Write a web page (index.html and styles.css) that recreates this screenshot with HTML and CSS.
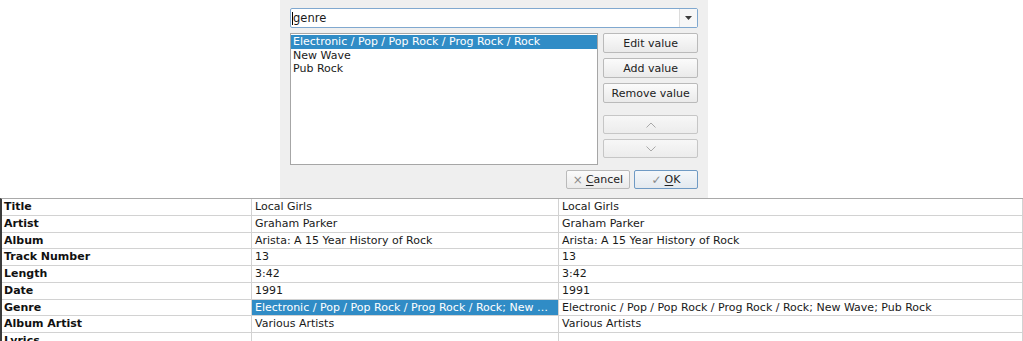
FILE: index.html
```html
<!DOCTYPE html>
<html lang="en">
<head>
    <meta charset="UTF-8">
    <title>Tag editor</title>
    <link rel="stylesheet" href="styles.css">
</head>
<body>
    <div class="top">
        <div class="dialog">
            <div class="combo">
                <div class="combo-text"><span class="caret"></span>genre</div>
                <div class="combo-arrow">
                    <svg width="7" height="4" viewBox="0 0 7 4"><polygon points="0,0 7,0 3.5,4" fill="#3c3c3c"/></svg>
                </div>
            </div>

            <div class="editor">
                <div class="value-list">
                    <div class="item selected">Electronic / Pop / Pop Rock / Prog Rock / Rock</div>
                    <div class="item">New Wave</div>
                    <div class="item">Pub Rock</div>
                </div>
                <div class="side-buttons">
                    <button class="btn">Edit value</button>
                    <button class="btn">Add value</button>
                    <button class="btn">Remove value</button>
                    <button class="btn move first-move" disabled>
                        <svg width="10" height="6" viewBox="0 0 10 6"><polyline points="0.5,5.5 5,1 9.5,5.5" fill="none" stroke="#a9a9a9" stroke-width="1"/></svg>
                    </button>
                    <button class="btn move" disabled>
                        <svg width="10" height="6" viewBox="0 0 10 6"><polyline points="0.5,0.5 5,5 9.5,0.5" fill="none" stroke="#a9a9a9" stroke-width="1"/></svg>
                    </button>
                </div>
            </div>

            <div class="footer">
                <button class="btn footer-btn"><span class="icon">×</span><span class="label"><u>C</u>ancel</span></button>
                <button class="btn footer-btn default"><span class="icon">✓</span><span class="label"><u>O</u>K</span></button>
            </div>
        </div>
    </div>

    <div class="tags" id="tags"></div>

    <script>
        const rows = [
            ['Title', 'Local Girls', 'Local Girls'],
            ['Artist', 'Graham Parker', 'Graham Parker'],
            ['Album', 'Arista: A 15 Year History of Rock', 'Arista: A 15 Year History of Rock'],
            ['Track Number', '13', '13'],
            ['Length', '3:42', '3:42'],
            ['Date', '1991', '1991'],
            ['Genre', 'Electronic / Pop / Pop Rock / Prog Rock / Rock; New …', 'Electronic / Pop / Pop Rock / Prog Rock / Rock; New Wave; Pub Rock'],
            ['Album Artist', 'Various Artists', 'Various Artists'],
            ['Lyrics', '', '']
        ];

        const tags = document.getElementById('tags');
        rows.forEach(row => {
            row.forEach((text, col) => {
                const cell = document.createElement('div');
                cell.className = col === 0 ? 'cell name' : 'cell';
                if (row[0] === 'Genre' && col === 1) {
                    cell.classList.add('selected');
                }
                cell.textContent = text;
                tags.appendChild(cell);
            });
        });
    </script>
</body>
</html>
```

FILE: styles.css
```css
html, body {
    margin: 0;
    padding: 0;
    background: #ffffff;
    font-family: "DejaVu Sans", sans-serif;
    font-size: 11px;
    color: #1a1a1a;
    overflow: hidden;
    height: 341px;
}

.top {
    height: 198px;
}

.dialog {
    margin-left: 280px;
    width: 408px;
    height: 180px;
    padding: 8px 10px 10px 10px;
    background: #efefef;
}

.combo {
    display: flex;
    height: 18px;
    border: 1px solid #80a8cf;
    border-radius: 2px;
    background: #ffffff;
}

.combo-text {
    flex: 1;
    display: flex;
    align-items: center;
    padding-left: 1px;
    font-size: 11.5px;
}

.caret {
    display: inline-block;
    width: 1px;
    height: 13px;
    background: #000000;
}

.combo-arrow {
    width: 17px;
    display: flex;
    align-items: center;
    justify-content: center;
    border-left: 1px solid #dcdcdc;
    background: #f7f7f7;
}

.editor {
    display: flex;
    gap: 5px;
    margin-top: 5px;
}

.value-list {
    width: 307px;
    height: 129px;
    border: 1px solid #a6a6a6;
    background: #ffffff;
    padding-top: 1px;
}

.item {
    height: 13.5px;
    line-height: 13.5px;
    padding-left: 2px;
    white-space: nowrap;
    color: #1a1a1a;
}

.item.selected {
    background: #308cc6;
    color: #ffffff;
}

.side-buttons {
    display: flex;
    flex-direction: column;
    gap: 5px;
    width: 95px;
}

.btn {
    height: 20px;
    padding: 0;
    border: 1px solid #bababa;
    border-radius: 2px;
    background: linear-gradient(#fbfbfb, #eaeaea);
    font-family: "DejaVu Sans", sans-serif;
    font-size: 11px;
    color: #222222;
}

.btn.move {
    height: 19px;
    display: flex;
    align-items: center;
    justify-content: center;
    background: linear-gradient(#f7f7f7, #ececec);
    border-color: #c6c6c6;
}

.first-move {
    margin-top: 7px;
}

.footer {
    display: flex;
    justify-content: flex-end;
    gap: 4px;
    margin-top: 5px;
}

.footer-btn {
    width: 64px;
    height: 19px;
    display: flex;
    align-items: center;
    justify-content: center;
    gap: 3px;
}

.footer-btn.default {
    border-color: #6f9ac4;
    background: linear-gradient(#f4f7fa, #e3e9ef);
}

.footer-btn .icon {
    color: #8a8a8a;
    font-size: 12px;
}

.footer-btn u {
    text-decoration-thickness: 1px;
    text-underline-offset: 2px;
}

.tags {
    display: grid;
    grid-template-columns: 250px 307px 1fr;
    grid-auto-rows: 16.75px;
    border-top: 1px solid #a9a9a9;
    border-left: 2px solid #3c3c3c;
    height: 142px;
    overflow: hidden;
}

.cell {
    border-bottom: 1px solid #d2d2d2;
    border-right: 1px solid #d2d2d2;
    padding-left: 3px;
    line-height: 15.75px;
    white-space: nowrap;
    overflow: hidden;
    color: #1a1a1a;
}

.cell.name {
    font-weight: bold;
    padding-left: 2px;
    color: #111111;
}

.cell.selected {
    background: #308cc6;
    color: #ffffff;
}
```
